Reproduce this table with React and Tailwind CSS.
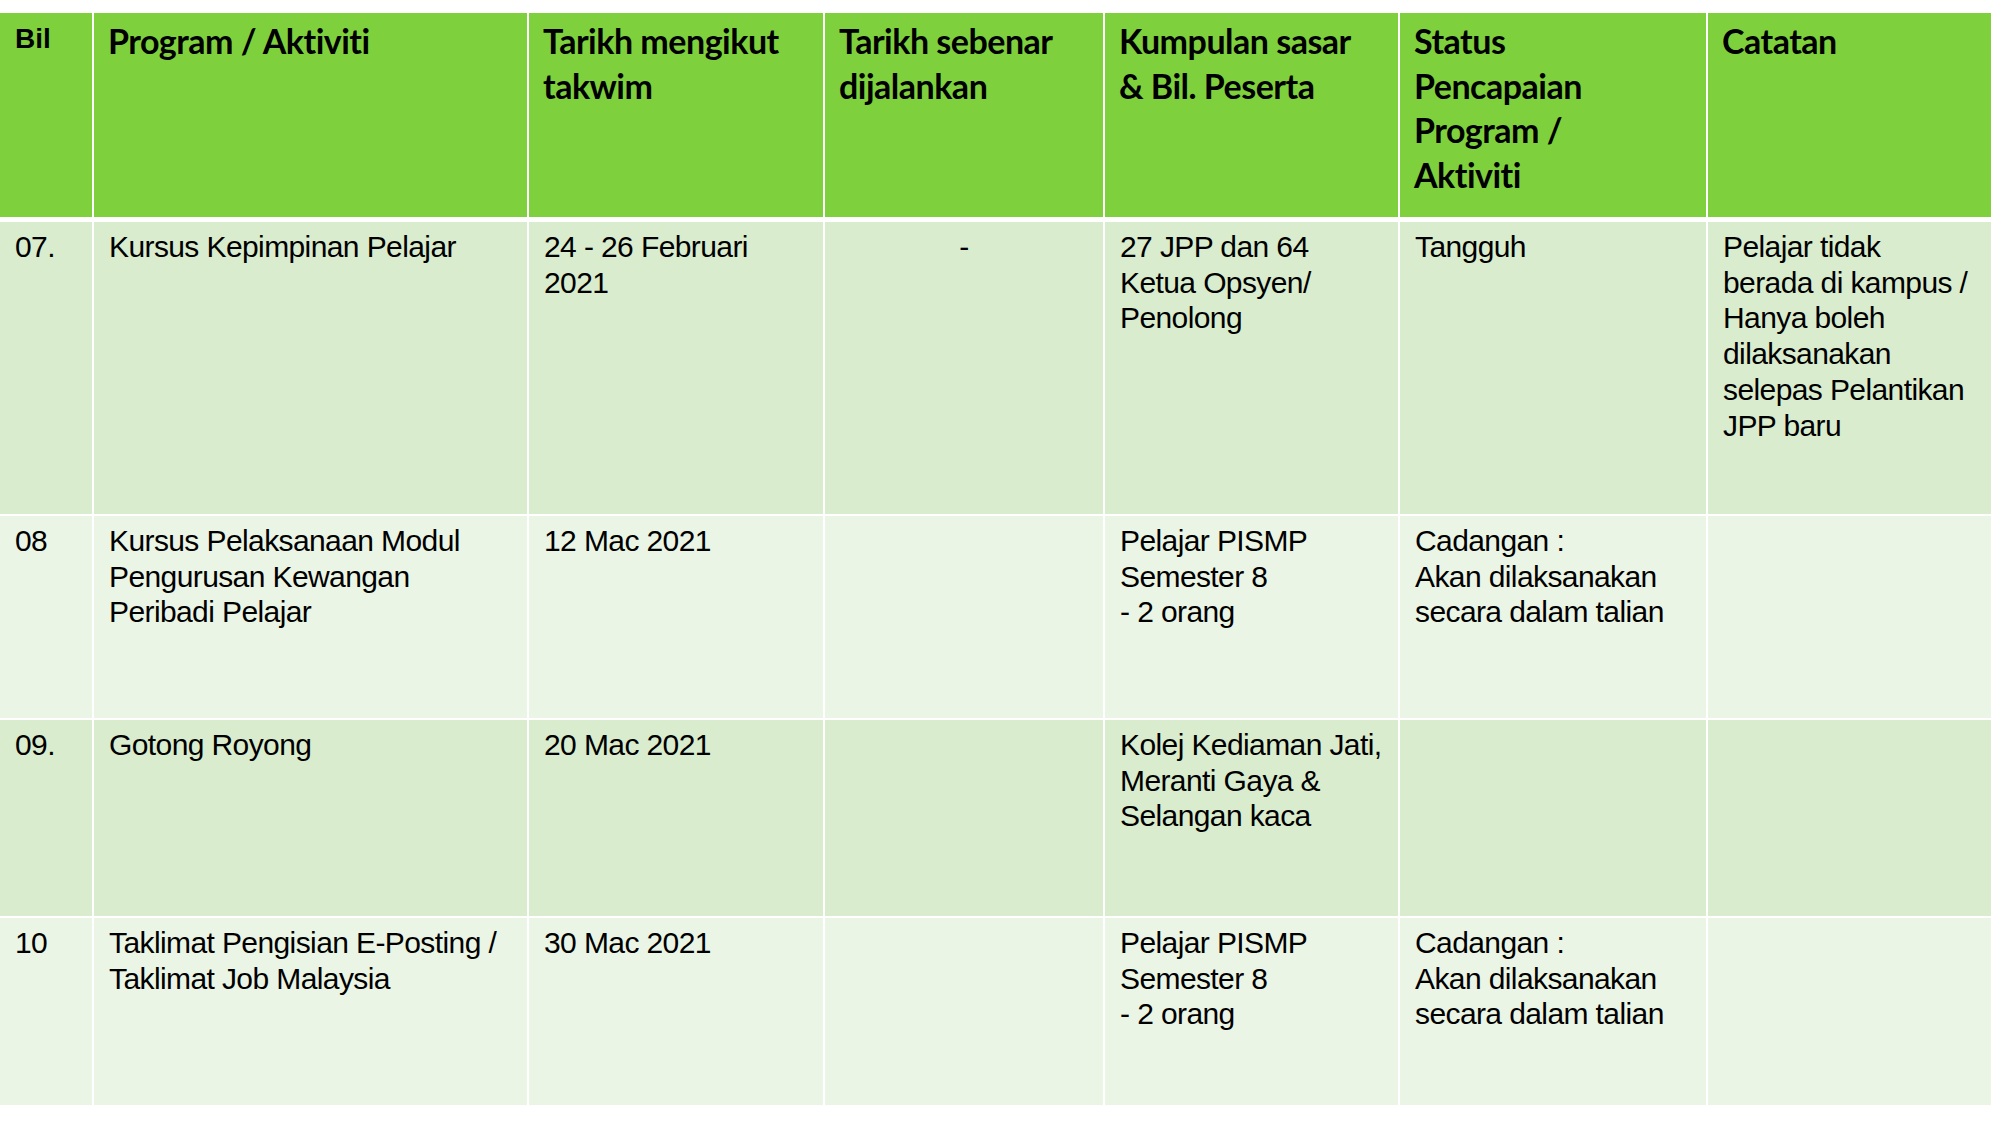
const widths = ["w-[92px]", "w-[433px]", "w-[294px]", "w-[278px]", "w-[293px]", "w-[306px]", "w-[283px]"];

const headers = [
    "Program / Aktiviti",
    "Tarikh mengikut\ntakwim",
    "Tarikh sebenar\ndijalankan",
    "Kumpulan sasar\n& Bil. Peserta",
    "Status\nPencapaian\nProgram /\nAktiviti",
    "Catatan"
];

const rows = [
    {
        h: "h-[292px]",
        bg: "bg-[#d9ecce]",
        cells: [
            "07.",
            "Kursus Kepimpinan Pelajar",
            "24 - 26 Februari\n2021",
            "-",
            "27 JPP dan 64\nKetua Opsyen/\nPenolong",
            "Tangguh",
            "Pelajar tidak\nberada di kampus /\nHanya boleh\ndilaksanakan\nselepas Pelantikan\nJPP baru"
        ]
    },
    {
        h: "h-[202px]",
        bg: "bg-[#ebf5e5]",
        cells: [
            "08",
            "Kursus Pelaksanaan Modul\nPengurusan Kewangan\nPeribadi Pelajar",
            "12 Mac 2021",
            "",
            "Pelajar PISMP\nSemester 8\n- 2 orang",
            "Cadangan :\nAkan dilaksanakan\nsecara dalam talian",
            ""
        ]
    },
    {
        h: "h-[196px]",
        bg: "bg-[#d9ecce]",
        cells: [
            "09.",
            "Gotong Royong",
            "20 Mac 2021",
            "",
            "Kolej Kediaman Jati,\nMeranti Gaya &\nSelangan kaca",
            "",
            ""
        ]
    },
    {
        h: "h-[187px]",
        bg: "bg-[#ebf5e5]",
        cells: [
            "10",
            "Taklimat Pengisian E-Posting /\nTaklimat Job Malaysia",
            "30 Mac 2021",
            "",
            "Pelajar PISMP\nSemester 8\n- 2 orang",
            "Cadangan :\nAkan dilaksanakan\nsecara dalam talian",
            ""
        ]
    }
];

function BodyCell({ text, width, bg, center }) {
    return (
        <div className={`${width} ${bg} shrink-0 pt-[7px] whitespace-pre-line text-[30px] leading-[35.7px] tracking-[-0.6px] text-black font-['Liberation_Sans',Arial,sans-serif] ${center ? "text-center" : "pl-[15px] pr-2"}`}>
            {text}
        </div>
    );
}

export default function App() {
    return (
        <div className="w-[2000px] h-[1125px] bg-white pt-[13px] overflow-hidden">
            <div className="w-[1991px] flex flex-col gap-[2px]">
                {/* Header */}
                <div className="flex gap-[2px] h-[204px] mb-[3px]">
                    <div className={`${widths[0]} shrink-0 bg-[#7ed13c] pl-[15px] pt-[10px] text-[28px] leading-[32px] font-bold text-black font-['Liberation_Sans',Arial,sans-serif]`}>
                        Bil
                    </div>
                    {headers.map((label, i) => (
                        <div
                            key={label}
                            className={`${widths[i + 1]} shrink-0 bg-[#7ed13c] pl-[14px] pr-1 pt-[6px] whitespace-pre-line text-[34px] leading-[44.6px] font-bold text-black font-['Lato','Open_Sans',sans-serif] tracking-[-0.5px]`}
                        >
                            {label}
                        </div>
                    ))}
                </div>

                {/* Rows */}
                {rows.map((row, r) => (
                    <div key={r} className={`flex gap-[2px] ${row.h}`}>
                        {row.cells.map((text, i) => (
                            <BodyCell key={i} text={text} width={widths[i]} bg={row.bg} center={i === 3} />
                        ))}
                    </div>
                ))}
            </div>
        </div>
    );
}
